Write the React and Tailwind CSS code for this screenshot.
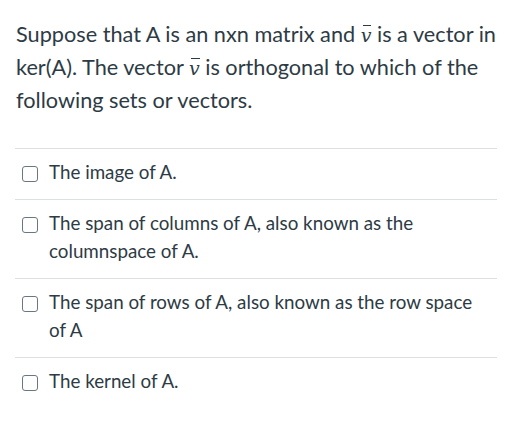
import React from "react";

const options = [
  "The image of A.",
  "The span of columns of A, also known as the columnspace of A.",
  "The span of rows of A, also known as the row space of A",
  "The kernel of A.",
];

function Vbar() {
  return (
    <span className="relative inline-block" style={{ fontFamily: '"DejaVu Serif", serif' }}>
      <span className="italic text-[19px]">v</span>
      <span className="absolute left-[2px] right-[0px] top-[6px] h-[1px] bg-[#2d3b45]" />
    </span>
  );
}

export default function App() {
  return (
    <div className="w-[517px] h-[424px] bg-white text-[#2d3b45]" style={{ fontFamily: 'Lato, "Open Sans", sans-serif' }}>
      <div className="pl-4 pr-4 pt-[18px] text-[21.7px] leading-[32px]">
        Suppose that A is an nxn matrix and <Vbar /> is a vector in ker(A). The vector <Vbar /> is orthogonal to which of the following sets or vectors.
      </div>
      <div className="mx-[15px] w-[482px] mt-[32px] border-t border-[#dde0e3]">
        {options.map((opt, i) => (
          <div key={i} className={"flex items-start gap-3 pl-[7px] pt-[9px] pb-[13px] " + (i < options.length - 1 ? "border-b border-[#dde0e3]" : "")}>
            <span className="mt-[8px] w-[16px] h-[16px] shrink-0 rounded-[3px] border border-[#6b7780]" />
            <span className="text-[18.8px] leading-[28px] pr-4 -ml-[1px]">{opt}</span>
          </div>
        ))}
      </div>
    </div>
  );
}
